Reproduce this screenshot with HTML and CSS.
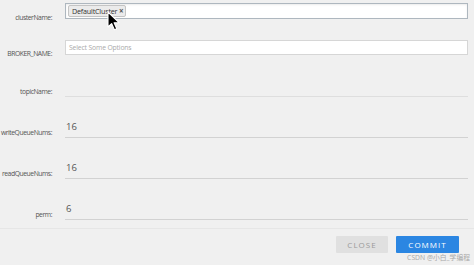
FILE: index.html
```html
<!DOCTYPE html>
<html>
<head>
<meta charset="utf-8">
<link rel="stylesheet" href="styles.css">
</head>
<body>
<div class="dialog">
  <div class="form">
    <div class="row row-cluster">
      <label class="label"><span>clusterName:</span></label>
      <div class="select select-focus">
        <span class="tag">DefaultCluster <span class="tag-x">×</span></span>
      </div>
    </div>
    <div class="row row-broker">
      <label class="label"><span>BROKER_NAME:</span></label>
      <div class="select select-empty">Select Some Options</div>
    </div>
    <div class="row row-line">
      <label class="label"><span>topicName:</span></label>
      <div class="field field-disabled"></div>
    </div>
    <div class="row row-line">
      <label class="label"><span>writeQueueNums:</span></label>
      <div class="field">16</div>
    </div>
    <div class="row row-line">
      <label class="label"><span>readQueueNums:</span></label>
      <div class="field">16</div>
    </div>
    <div class="row row-line">
      <label class="label"><span>perm:</span></label>
      <div class="field">6</div>
    </div>
  </div>
  <div class="actions">
    <button class="btn btn-close">CLOSE</button>
    <button class="btn btn-commit">COMMIT</button>
  </div>
  <div class="watermark">CSDN @小白_学编程</div>
  <svg class="cursor" width="14" height="20" viewBox="0 0 14 20">
    <path d="M1 1 L1 16 L4.6 12.6 L7.4 18.8 L9.8 17.7 L7.1 11.7 L12 11.7 Z" fill="#000" stroke="#fff" stroke-width="1.1" stroke-linejoin="round"/>
  </svg>
</div>
</body>
</html>
```
FILE: styles.css
```css
html, body {
  margin: 0;
  padding: 0;
  background: #f0f0f0;
}
body {
  width: 474px;
  height: 265px;
  overflow: hidden;
  font-family: "Open Sans", "Noto Sans", "Noto Sans CJK SC", sans-serif;
}
.dialog {
  position: relative;
  width: 474px;
  height: 265px;
  background: #f0f0f0;
}
.form {
  display: flex;
  flex-direction: column;
  padding-right: 6px;
}
.row {
  display: grid;
  grid-template-columns: 52px 1fr;
  column-gap: 13px;
  align-items: start;
}
.label {
  display: flex;
  justify-content: flex-end;
  font-size: 6.8px;
  letter-spacing: -0.45px;
  line-height: 10px;
  color: #555;
  white-space: nowrap;
  min-width: 0;
}
.label span {
  flex-shrink: 0;
}
.row-cluster {
  height: 30px;
}
.row-cluster .label {
  margin-top: 13px;
}
.row-cluster .select {
  margin-top: 3px;
}
.row-broker {
  height: 50px;
}
.row-broker .label {
  margin-top: 19px;
}
.row-broker .select {
  margin-top: 10px;
}
.select {
  box-sizing: border-box;
  height: 16px;
  background: #fff;
  border: 1px solid #cfd2d5;
  display: flex;
  align-items: center;
  padding-left: 2px;
}
.select-focus {
  border-color: #aeb7bf;
  box-shadow: inset 0 1px 2px rgba(0,0,0,0.08);
}
.select-empty {
  height: 15px;
  font-size: 6.8px;
  letter-spacing: -0.15px;
  color: #aaa;
  padding-left: 3px;
  border-color: #d6d6d6;
}
.tag {
  display: inline-flex;
  align-items: center;
  height: 12px;
  box-sizing: border-box;
  padding: 0 2px 0 3px;
  background: #ebebeb;
  border: 1px solid #c4c4c4;
  border-radius: 2px;
  font-size: 7.2px;
  letter-spacing: -0.2px;
  color: #333;
  line-height: 10px;
  white-space: pre;
}
.tag-x {
  font-size: 8px;
  font-weight: bold;
  color: #555;
  margin-left: 0;
}
.row-line {
  height: 41px;
}
.row-line .label {
  margin-top: 7px;
}
.field {
  box-sizing: border-box;
  height: 17px;
  padding: 0 0 4px 1px;
  line-height: 12px;
  font-size: 9.5px;
  color: #555;
  border-bottom: 1px solid #d2d2d2;
}
.field-disabled {
  border-bottom: 1px solid #dedede;
}
.actions {
  margin-top: -16px;
  border-top: 1px solid #e6e6e6;
  display: flex;
  justify-content: flex-end;
  gap: 8px;
  padding: 7px 15px 0 0;
}
.btn {
  height: 17px;
  border: none;
  border-radius: 1px;
  font-family: "Open Sans", sans-serif;
  font-size: 8px;
  font-weight: 500;
  letter-spacing: 1px;
  padding: 0;
  cursor: pointer;
}
.btn-close {
  width: 52px;
  background: #e0e0e0;
  color: #9a9a9a;
}
.btn-commit {
  width: 63px;
  background: #2b86e2;
  color: #fff;
}
.watermark {
  position: absolute;
  right: 4px;
  bottom: 3px;
  font-size: 6.8px;
  color: #a8a8a8;
  font-family: "Open Sans", "Noto Sans CJK SC", sans-serif;
}
.cursor {
  position: absolute;
  left: 107px;
  top: 11px;
}
```
